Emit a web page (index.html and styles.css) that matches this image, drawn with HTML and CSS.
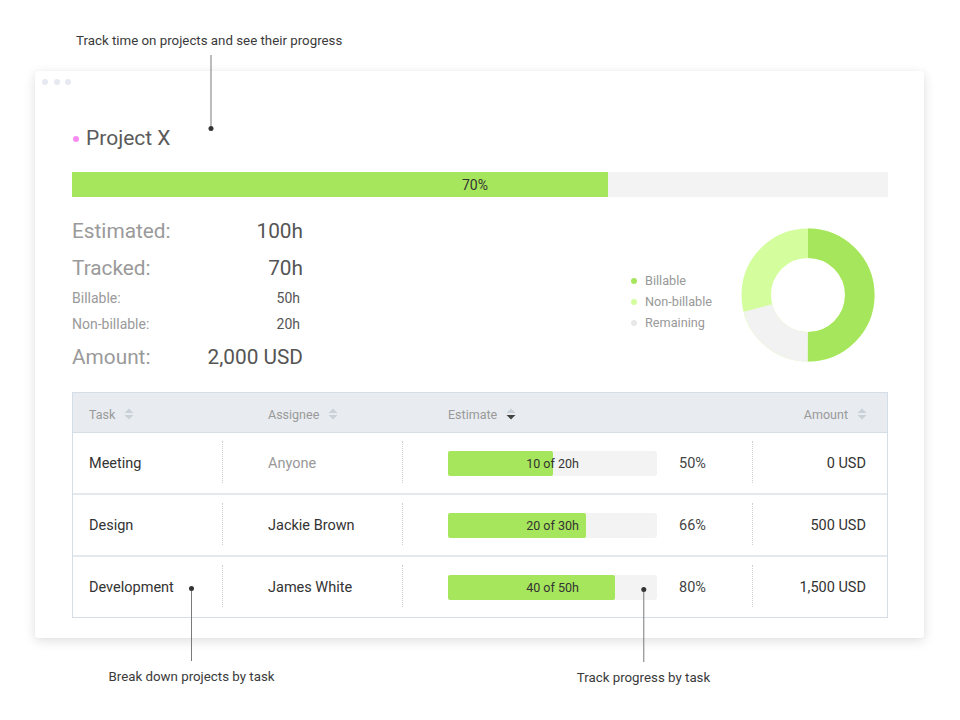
FILE: index.html
```html
<!DOCTYPE html>
<html>
<head>
<meta charset="utf-8">
<link rel="stylesheet" href="styles.css">
</head>
<body>
<div class="page">
  <p class="caption top-caption">Track time on projects and see their progress</p>
  <div class="card">
    <div class="dots"><span></span><span></span><span></span></div>
    <div class="content">
      <h1 class="title"><span class="pdot"></span>Project X</h1>
      <div class="bar">
        <div class="bar-fill" style="width:65.7%"></div>
        <span class="bar-label">70%</span>
      </div>
      <div class="summary">
        <div class="stats">
          <span class="lbl big r1">Estimated:</span><span class="val big r1">100h</span>
          <span class="lbl big r2">Tracked:</span><span class="val big r2">70h</span>
          <span class="lbl small r3">Billable:</span><span class="val small r3">50h</span>
          <span class="lbl small r4">Non-billable:</span><span class="val small r4">20h</span>
          <span class="lbl big r5">Amount:</span><span class="val big r5">2,000 USD</span>
        </div>
        <div class="chart">
          <ul class="legend">
            <li><span class="ldot billable"></span>Billable</li>
            <li><span class="ldot nonbillable"></span>Non-billable</li>
            <li><span class="ldot remaining"></span>Remaining</li>
          </ul>
          <svg class="donut" width="134" height="134" viewBox="0 0 134 134">
            <g transform="rotate(-90 67 67)">
              <circle cx="67" cy="67" r="51.75" fill="none" stroke="#d4fd9e" stroke-width="29.5"/>
              <circle cx="67" cy="67" r="51.75" fill="none" stroke="#a6e65c" stroke-width="29.5" stroke-dasharray="162.6 400" stroke-dashoffset="0"/>
              <circle cx="67" cy="67" r="51.75" fill="none" stroke="#f2f2f2" stroke-width="29.5" stroke-dasharray="67.7 400" stroke-dashoffset="-162.6"/>
            </g>
          </svg>
        </div>
      </div>
      <div class="table">
        <div class="thead">
          <div class="th">Task <svg class="sort" width="10" height="12" viewBox="0 0 10 12"><polygon points="0.5,5 5,0.5 9.5,5" fill="#c9d0d7"/><polygon points="0.5,7 5,11.5 9.5,7" fill="#c9d0d7"/></svg></div>
          <div class="th pad">Assignee <svg class="sort" width="10" height="12" viewBox="0 0 10 12"><polygon points="0.5,5 5,0.5 9.5,5" fill="#c9d0d7"/><polygon points="0.5,7 5,11.5 9.5,7" fill="#c9d0d7"/></svg></div>
          <div class="th pad">Estimate <svg class="sort" width="10" height="12" viewBox="0 0 10 12"><polygon points="0.5,5 5,0.5 9.5,5" fill="#c9d0d7"/><polygon points="0.5,7 5,11.5 9.5,7" fill="#444444"/></svg></div>
          <div class="th right">Amount <svg class="sort" width="10" height="12" viewBox="0 0 10 12"><polygon points="0.5,5 5,0.5 9.5,5" fill="#c9d0d7"/><polygon points="0.5,7 5,11.5 9.5,7" fill="#c9d0d7"/></svg></div>
        </div>
        <div class="row">
          <div class="td">Meeting</div>
          <div class="td sep pad muted">Anyone</div>
          <div class="td sep pad">
            <div class="tbar"><div class="tbar-fill" style="width:50%"></div><span class="tbar-label">10 of 20h</span></div>
            <span class="pct">50%</span>
          </div>
          <div class="td sep right">0 USD</div>
        </div>
        <div class="row">
          <div class="td">Design</div>
          <div class="td sep pad">Jackie Brown</div>
          <div class="td sep pad">
            <div class="tbar"><div class="tbar-fill" style="width:66%"></div><span class="tbar-label">20 of 30h</span></div>
            <span class="pct">66%</span>
          </div>
          <div class="td sep right">500 USD</div>
        </div>
        <div class="row last">
          <div class="td">Development</div>
          <div class="td sep pad">James White</div>
          <div class="td sep pad">
            <div class="tbar"><div class="tbar-fill" style="width:80%"></div><span class="tbar-label">40 of 50h</span></div>
            <span class="pct">80%</span>
          </div>
          <div class="td sep right">1,500 USD</div>
        </div>
      </div>
    </div>
  </div>

  <div class="callout callout-top">
    <span class="cline"></span>
    <span class="cdot"></span>
  </div>
  <div class="callout callout-left">
    <span class="cdot"></span>
    <span class="cline"></span>
    <span class="caption">Break down projects by task</span>
  </div>
  <div class="callout callout-right">
    <span class="cdot"></span>
    <span class="cline"></span>
    <span class="caption">Track progress by task</span>
  </div>
</div>
</body>
</html>
```

FILE: styles.css
```css
* { box-sizing: border-box; }
html, body { margin: 0; padding: 0; background: #ffffff; }
body { font-family: Roboto, "Liberation Sans", sans-serif; color: #333; }

.page {
  position: relative;
  width: 960px;
  height: 720px;
  padding-top: 33px;
  overflow: hidden;
}

.caption {
  margin: 0;
  font-size: 13.3px;
  line-height: 16px;
  color: #3a3a3a;
  white-space: nowrap;
}
.top-caption { padding-left: 76px; }

.card {
  margin: 22px 0 0 35px;
  width: 889px;
  height: 567px;
  background: #fff;
  border-radius: 3px;
  box-shadow: 0 3px 12px rgba(0, 0, 0, 0.13), 0 0 2px rgba(0, 0, 0, 0.04);
}

.dots {
  display: flex;
  gap: 5.5px;
  padding: 8px 0 0 7px;
  height: 14px;
}
.dots span {
  width: 6px;
  height: 6px;
  border-radius: 50%;
  background: #e6eaf0;
}

.content { padding: 0 36px 0 37px; }

.title {
  margin: 39px 0 0 0;
  display: flex;
  align-items: center;
  font-size: 21px;
  font-weight: 400;
  line-height: 28px;
  color: #5a5a5a;
}
.pdot {
  width: 6px;
  height: 6px;
  border-radius: 50%;
  background: #f48cf2;
  margin: 2px 7px 0 1px;
}

.bar {
  margin-top: 20px;
  height: 25px;
  background: #f3f3f3;
  display: grid;
}
.bar-fill {
  grid-area: 1 / 1;
  height: 25px;
  background: #a6e65c;
}
.bar-label {
  grid-area: 1 / 1;
  justify-self: center;
  align-self: center;
  font-size: 14px;
  color: #333;
  margin-left: -10px;
  margin-top: 1px;
}

.summary {
  display: flex;
  justify-content: space-between;
  margin-top: 15px;
}

.stats {
  width: 231px;
  display: grid;
  grid-template-columns: auto 1fr;
  grid-template-rows: 37px 37px 24px 28px 38px;
  align-items: center;
}
.lbl { color: #9a9a9a; }
.val { color: #555; justify-self: end; }
.big { font-size: 20.8px; }
.small { font-size: 14px; }
.val.small { margin-right: 3px; }

.chart {
  display: flex;
  align-items: flex-start;
  margin-top: 16px;
  margin-right: 13px;
}
.legend {
  list-style: none;
  margin: 42px 0 0 0;
  padding: 0;
  width: 110px;
}
.legend li {
  display: flex;
  align-items: center;
  font-size: 12.7px;
  line-height: 21px;
  color: #999;
}
.ldot {
  width: 6px;
  height: 6px;
  border-radius: 50%;
  margin-right: 8px;
}
.ldot.billable { background: #a6e65c; }
.ldot.nonbillable { background: #d4fd9e; }
.ldot.remaining { background: #e8e8e8; }
.donut { display: block; }

.table {
  margin-top: 16px;
  border: 1px solid #d5dee6;
}
.thead, .row {
  display: grid;
  grid-template-columns: 149px 180px 350px 135px;
}
.thead {
  height: 40px;
  padding-top: 3px;
  background: #e8ecf0;
  border-bottom: 1px solid #d5dee6;
}
.th {
  display: flex;
  align-items: center;
  padding-left: 16px;
  font-size: 12.5px;
  color: #999;
}
.th.pad { padding-left: 46px; }
.th.right { justify-content: flex-end; padding-right: 20px; }
.sort { margin-left: 9px; }

.row {
  height: 62px;
  padding: 8px 0 10px 0;
  border-bottom: 2px solid #e4e9ee;
}
.row.last { border-bottom: none; height: 60px; }
.td {
  display: flex;
  align-items: center;
  padding-left: 16px;
  padding-top: 2px;
  font-size: 14.5px;
  color: #333;
}
.td.sep { border-left: 1px dotted #cfcfcf; }
.td.pad { padding-left: 45px; }
.td.muted { color: #999; }
.td.right { justify-content: flex-end; padding-right: 21px; }

.tbar {
  width: 209px;
  height: 25px;
  background: #f3f3f3;
  border-radius: 3px;
  display: grid;
}
.tbar-fill {
  grid-area: 1 / 1;
  height: 25px;
  background: #a6e65c;
  border-radius: 2px;
}
.tbar-label {
  grid-area: 1 / 1;
  justify-self: center;
  align-self: center;
  font-size: 12.5px;
  color: #333;
}
.pct {
  margin-left: 22px;
  color: #444;
}

.callout {
  position: absolute;
  display: flex;
  flex-direction: column;
  align-items: center;
  transform: translateX(-50%);
}
.cline {
  width: 1px;
  background: #7a7a7a;
}
.cdot {
  width: 5px;
  height: 5px;
  border-radius: 50%;
  background: #333;
}
.callout-top { left: 210.5px; top: 55px; }
.callout-top .cline { height: 71px; }
.callout-left { left: 191.5px; top: 586px; }
.callout-right { left: 643.5px; top: 587px; }
.callout-left .cline, .callout-right .cline { height: 70px; }
.callout-left .caption, .callout-right .caption { margin-top: 8px; }
```
